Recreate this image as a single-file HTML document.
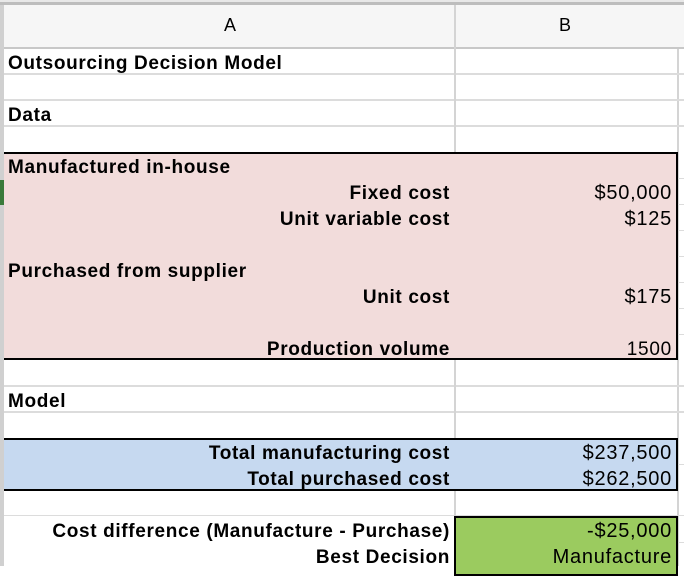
<!DOCTYPE html>
<html><head><style>
body{margin:0;width:684px;height:566px;overflow:hidden;background:#fff;position:relative;font-family:"Liberation Sans",Arial,sans-serif;}
div{position:absolute;box-sizing:border-box;}
.t{font-size:19px;letter-spacing:0.65px;font-weight:bold;color:#000;line-height:31px;white-space:nowrap}
.l{left:8px}
.r{right:234px;text-align:right}
.n{right:12px;text-align:right;font-size:20px;letter-spacing:0.75px;font-weight:normal}
</style></head><body>
<div style="left:0;top:0;width:684px;height:2px;background:#e8e8e8"></div>
<div style="left:0;top:2px;width:684px;height:3px;background:#bdbdbd"></div>
<div style="left:0;top:5px;width:684px;height:43px;background:#f6f6f6"></div>
<div style="left:224px;top:15px;font-size:18px;">A</div>
<div style="left:559px;top:15px;font-size:18px;">B</div>
<div style="left:0;top:5px;width:4px;height:561px;background:#d0d0d0"></div>
<div style="left:0;top:180px;width:4px;height:25px;background:#3a7a3a"></div>
<div style="left:4px;top:152px;width:674px;height:208px;background:#f2dcdb;border:2px solid #000;border-left:none"></div>
<div style="left:4px;top:438px;width:674px;height:53px;background:#c6d9f0;border:2px solid #000;border-left:none"></div>
<div style="left:454px;top:516px;width:224px;height:60px;background:#9bcb5f;border:2px solid #000"></div>
<div style="left:4px;top:47px;width:680px;height:2px;background:#c8c8c8"></div>
<div style="left:4px;top:73px;width:680px;height:2px;background:#dcdcdc"></div>
<div style="left:4px;top:99px;width:680px;height:2px;background:#dcdcdc"></div>
<div style="left:4px;top:125px;width:680px;height:2px;background:#dcdcdc"></div>
<div style="left:4px;top:385px;width:680px;height:2px;background:#dcdcdc"></div>
<div style="left:4px;top:411px;width:680px;height:2px;background:#dcdcdc"></div>
<div style="left:4px;top:515px;width:680px;height:1px;background:#dcdcdc"></div>
<div style="left:454px;top:5px;width:2px;height:147px;background:#d4d4d4"></div>
<div style="left:454px;top:360px;width:2px;height:78px;background:#d4d4d4"></div>
<div style="left:454px;top:491px;width:2px;height:25px;background:#d4d4d4"></div>
<div style="left:677px;top:5px;width:2px;height:561px;background:#d4d4d4;z-index:-1"></div>
<div style="left:678px;top:178px;width:6px;height:1px;background:#dcdcdc"></div>
<div style="left:678px;top:204px;width:6px;height:1px;background:#dcdcdc"></div>
<div style="left:678px;top:230px;width:6px;height:1px;background:#dcdcdc"></div>
<div style="left:678px;top:256px;width:6px;height:1px;background:#dcdcdc"></div>
<div style="left:678px;top:282px;width:6px;height:1px;background:#dcdcdc"></div>
<div style="left:678px;top:308px;width:6px;height:1px;background:#dcdcdc"></div>
<div style="left:678px;top:334px;width:6px;height:1px;background:#dcdcdc"></div>
<div style="left:678px;top:464px;width:6px;height:1px;background:#dcdcdc"></div>
<div style="left:678px;top:542px;width:6px;height:1px;background:#dcdcdc"></div>
<div class="t l" style="top:48px">Outsourcing Decision Model</div>
<div class="t l" style="top:100px">Data</div>
<div class="t l" style="top:152px">Manufactured in-house</div>
<div class="t r" style="top:178px">Fixed cost</div>
<div class="t n" style="top:178px">$50,000</div>
<div class="t r" style="top:204px">Unit variable cost</div>
<div class="t n" style="top:204px">$125</div>
<div class="t l" style="top:256px">Purchased from supplier</div>
<div class="t r" style="top:282px">Unit cost</div>
<div class="t n" style="top:282px">$175</div>
<div class="t r" style="top:334px">Production volume</div>
<div class="t n" style="top:334px;font-size:19px">1500</div>
<div class="t l" style="top:386px">Model</div>
<div class="t r" style="top:438px">Total manufacturing cost</div>
<div class="t n" style="top:438px">$237,500</div>
<div class="t r" style="top:464px">Total purchased cost</div>
<div class="t n" style="top:464px">$262,500</div>
<div class="t r" style="top:516px">Cost difference (Manufacture - Purchase)</div>
<div class="t n" style="top:516px">-$25,000</div>
<div class="t r" style="top:542px">Best Decision</div>
<div class="t n" style="top:542px">Manufacture</div>
</body></html>
